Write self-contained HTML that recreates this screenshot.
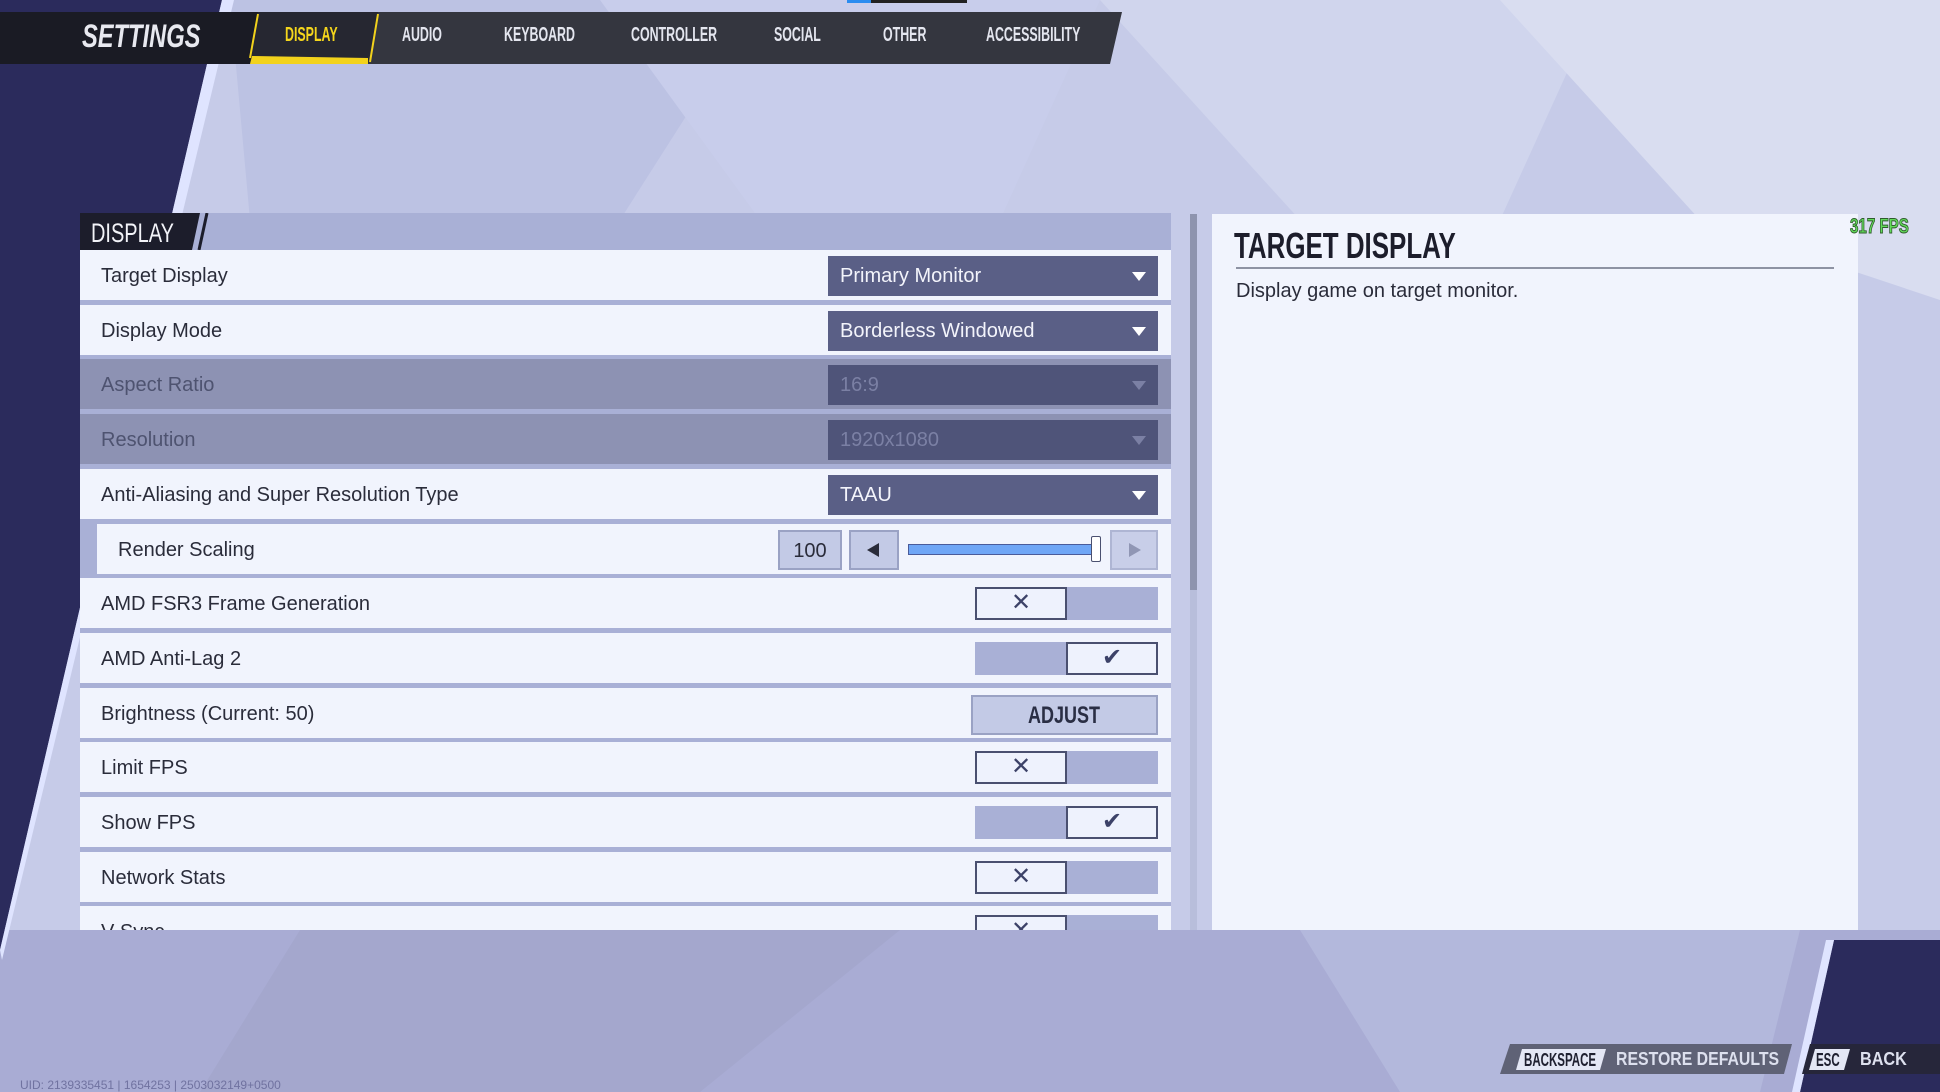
<!DOCTYPE html>
<html><head><meta charset="utf-8"><style>
*{margin:0;padding:0;box-sizing:border-box}
body{width:1940px;height:1092px;overflow:hidden;position:relative;font-family:"Liberation Sans",sans-serif;background:#c6cbe8}
.abs{position:absolute}
.cond{display:inline-block;transform-origin:left center;font-weight:bold}
.row{position:absolute;left:80px;width:1091px;height:50px;background:#f1f4fd}
.lbl{position:absolute;left:21px;top:15px;font-size:20px;color:#2a2c3a}
.dd{position:absolute;left:748px;top:6px;width:330px;height:40px;background:#5a5f86;color:#f3f4fb;font-size:20px;padding:9px 12px}
.dd:after{content:"";position:absolute;right:12px;top:16px;border-left:7px solid transparent;border-right:7px solid transparent;border-top:9px solid #fff}
.dis{background:#8d92b3}
.dis .lbl{color:#4e5370}
.dis .dd{background:#4f5479;color:#7b80a4}
.dis .dd:after{border-top-color:#7b80a4}
.tg{position:absolute;left:895px;top:9px;width:183px;height:33px;background:#a9b0d6}
.tg .b{position:absolute;top:0;width:92px;height:33px;background:#eef2fd;border:2px solid #4a5070}
.tab{position:absolute;top:24px;font-size:20px;color:#e4e6ef}
</style></head><body>
<svg class="abs" style="left:0;top:0" width="1940" height="1092">
<polygon points="230,0 760,0 620,220 250,220" fill="#bcc2e3"/>
<polygon points="600,0 1100,0 1000,220 760,220" fill="#c8cdeb"/>
<polygon points="1100,0 1600,0 1500,220 1300,220" fill="#d0d5ed"/>
<polygon points="1500,0 1940,0 1940,300 1700,220" fill="#d9ddf0"/>
<polygon points="0,930 1940,930 1940,1092 0,1092" fill="#a9acd4"/>
<polygon points="300,930 900,930 700,1092 200,1092" fill="#a4a7cd"/>
<polygon points="1300,930 1800,930 1760,1092 1400,1092" fill="#b3b8dc"/>
<polygon points="0,0 222,0 0,950" fill="#2b2b5c"/>
<polygon points="222,0 234,0 2,960 0,950" fill="#dfe4ff"/>
<polygon points="1834,940 1940,940 1940,1092 1800,1092" fill="#2b2b5c"/>
<polygon points="1826,940 1834,940 1800,1092 1792,1092" fill="#dfe4ff"/>
</svg>
<div class="abs" style="left:847px;top:0;width:120px;height:3px;background:#222"></div>
<div class="abs" style="left:847px;top:0;width:24px;height:3px;background:#2a8cf0"></div>
<svg class="abs" style="left:0;top:12px" width="1130" height="52">
<polygon points="0,0 1122,0 1110,52 0,52" fill="#34363f"/>
<polygon points="0,0 258,0 250,52 0,52" fill="#1a1b24"/>
<polygon points="258,0 378,0 368,52 250,52" fill="#262731"/>
<polygon points="252,44 368,46 368,52 250,52" fill="#f2d21c"/>
<line x1="258" y1="2" x2="250" y2="46" stroke="#f2d21c" stroke-width="2"/>
<line x1="378" y1="2" x2="370" y2="50" stroke="#f2d21c" stroke-width="2"/>
</svg>
<div class="abs" style="left:82px;top:18px;font-size:32px;color:#e8e9f0;font-style:italic"><span class="cond" style="transform:scaleX(.74)">SETTINGS</span></div>
<div class="tab" style="left:285px;color:#f5d61c"><span class="cond" style="transform:scaleX(.62)">DISPLAY</span></div>
<div class="tab" style="left:402px"><span class="cond" style="transform:scaleX(.62)">AUDIO</span></div>
<div class="tab" style="left:504px"><span class="cond" style="transform:scaleX(.62)">KEYBOARD</span></div>
<div class="tab" style="left:631px"><span class="cond" style="transform:scaleX(.62)">CONTROLLER</span></div>
<div class="tab" style="left:774px"><span class="cond" style="transform:scaleX(.62)">SOCIAL</span></div>
<div class="tab" style="left:883px"><span class="cond" style="transform:scaleX(.62)">OTHER</span></div>
<div class="tab" style="left:986px"><span class="cond" style="transform:scaleX(.62)">ACCESSIBILITY</span></div>
<div class="abs" style="left:80px;top:213px;width:1091px;height:717px;background:#a9b0d6"></div>
<svg class="abs" style="left:80px;top:213px" width="130" height="37"><polygon points="0,0 120,0 112,37 0,37" fill="#1c1d2b"/><line x1="127" y1="0" x2="119" y2="37" stroke="#1c1d2b" stroke-width="3"/></svg>
<div class="abs" style="left:91px;top:218px;font-size:27px;color:#f2f3f8"><span class="cond" style="transform:scaleX(.74);font-weight:normal">DISPLAY</span></div>
<div class="abs" style="left:0;top:0;width:1940px;height:930px;overflow:hidden">
<div class="row" style="top:250px"><div class="lbl">Target Display</div><div class="dd">Primary Monitor</div></div>
<div class="row" style="top:304.7px"><div class="lbl">Display Mode</div><div class="dd">Borderless Windowed</div></div>
<div class="row dis" style="top:359.4px"><div class="lbl">Aspect Ratio</div><div class="dd">16:9</div></div>
<div class="row dis" style="top:414.1px"><div class="lbl">Resolution</div><div class="dd">1920x1080</div></div>
<div class="row" style="top:468.8px"><div class="lbl">Anti-Aliasing and Super Resolution Type</div><div class="dd">TAAU</div></div>
<div class="row" style="top:523.5px"><div class="abs" style="left:0;top:0;width:17px;height:50px;background:#a9b0d6"></div><div class="lbl" style="left:38px">Render Scaling</div>
 <div class="abs" style="left:698px;top:6px;width:64px;height:40px;background:#c3cae6;border:2px solid #9aa2c4;font-size:20px;color:#2a2c3a;text-align:center;padding-top:8px">100</div>
 <div class="abs" style="left:769px;top:6px;width:50px;height:40px;background:#c3cae6;border:2px solid #9aa2c4"><div class="abs" style="left:16px;top:11px;border-top:7px solid transparent;border-bottom:7px solid transparent;border-right:12px solid #2a2c3a"></div></div>
 <div class="abs" style="left:828px;top:20px;width:186px;height:11px;background:#6fa6f6;border:1px solid #4a5b9a"></div>
 <div class="abs" style="left:1011px;top:12px;width:10px;height:26px;background:#fff;border:1px solid #4a5070;border-radius:2px"></div>
 <div class="abs" style="left:1030px;top:6px;width:48px;height:40px;background:#c8cee8;border:2px solid #aeb5d3"><div class="abs" style="left:17px;top:11px;border-top:7px solid transparent;border-bottom:7px solid transparent;border-left:12px solid #9096b4"></div></div>
</div>
<div class="row" style="top:578.2px"><div class="lbl">AMD FSR3 Frame Generation</div><div class="tg"><div class="b" style="left:0;text-align:center;font-size:24px;color:#3c4268;line-height:28px">✕</div></div></div>
<div class="row" style="top:632.9px"><div class="lbl">AMD Anti-Lag 2</div><div class="tg"><div class="b" style="left:91px;text-align:center;font-size:24px;color:#3c4268;line-height:28px">✔</div></div></div>
<div class="row" style="top:687.6px"><div class="lbl">Brightness (Current: 50)</div><div class="abs" style="left:891px;top:7px;width:187px;height:40px;background:#c3cae6;border:2px solid #9aa2c4;text-align:center;font-size:24px;color:#2a2e44;padding-top:5px"><span class="cond" style="transform:scaleX(.75);transform-origin:center">ADJUST</span></div></div>
<div class="row" style="top:742.3px"><div class="lbl">Limit FPS</div><div class="tg"><div class="b" style="left:0;text-align:center;font-size:24px;color:#3c4268;line-height:28px">✕</div></div></div>
<div class="row" style="top:797px"><div class="lbl">Show FPS</div><div class="tg"><div class="b" style="left:91px;text-align:center;font-size:24px;color:#3c4268;line-height:28px">✔</div></div></div>
<div class="row" style="top:851.7px"><div class="lbl">Network Stats</div><div class="tg"><div class="b" style="left:0;text-align:center;font-size:24px;color:#3c4268;line-height:28px">✕</div></div></div>
<div class="row" style="top:906.4px"><div class="lbl">V-Sync</div><div class="tg"><div class="b" style="left:0;text-align:center;font-size:24px;color:#3c4268;line-height:28px">✕</div></div></div>
</div>
<div class="abs" style="left:1190px;top:214px;width:7px;height:716px;background:#b8bedb"></div>
<div class="abs" style="left:1190px;top:214px;width:7px;height:376px;background:#8e94ae"></div>
<div class="abs" style="left:1212px;top:214px;width:646px;height:716px;background:#f1f4fd"></div>
<div class="abs" style="left:1234px;top:225px;font-size:36px;color:#1c1d2b"><span class="cond" style="transform:scaleX(.72)">TARGET DISPLAY</span></div>
<div class="abs" style="left:1236px;top:267px;width:598px;height:2px;background:#8e93a3"></div>
<div class="abs" style="left:1236px;top:280px;font-size:20px;color:#2a2c3a">Display game on target monitor.</div>
<div class="abs" style="left:1850px;top:215px;font-size:21px;color:#62dc5a;-webkit-text-stroke:1px #2f5a2c"><span class="cond" style="transform:scaleX(.72)">317 FPS</span></div>
<svg class="abs" style="left:1500px;top:1044px" width="440" height="32">
<polygon points="10,0 292,0 284,30 0,30" fill="#5f6276"/>
<polygon points="22,5 106,5 100,26 16,26" fill="#e4e7f5"/>
<polygon points="310,0 440,0 440,30 302,30" fill="#26263a"/>
<polygon points="315,5 350,5 344,26 309,26" fill="#e4e7f5"/>
</svg>
<div class="abs" style="left:1524px;top:1050px;font-size:18px;color:#1f2030"><span class="cond" style="transform:scaleX(.64)">BACKSPACE</span></div>
<div class="abs" style="left:1616px;top:1049px;font-size:18px;color:#dde0ee"><span class="cond" style="transform:scaleX(.88)">RESTORE DEFAULTS</span></div>
<div class="abs" style="left:1816px;top:1050px;font-size:18px;color:#1f2030"><span class="cond" style="transform:scaleX(.64)">ESC</span></div>
<div class="abs" style="left:1860px;top:1049px;font-size:18px;color:#dde0ee"><span class="cond" style="transform:scaleX(.9)">BACK</span></div>
<div class="abs" style="left:20px;top:1078px;font-size:12px;color:#7072a0">UID: 2139335451 | 1654253 | 2503032149+0500</div>
</body></html>
